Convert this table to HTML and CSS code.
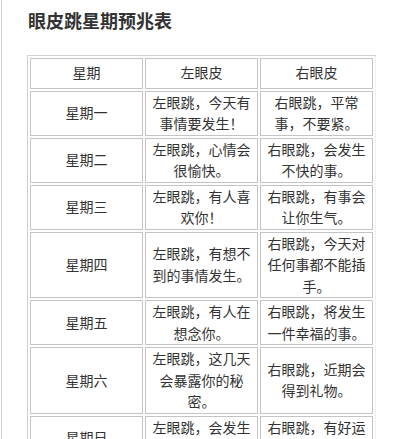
FILE: index.html
```html
<!DOCTYPE html>
<html lang="zh-CN">
<head>
<meta charset="utf-8">
<title>眼皮跳星期预兆表</title>
<link rel="stylesheet" href="styles.css">
</head>
<body>
<div class="page">
  <h2 class="title">眼皮跳星期预兆表</h2>
  <table class="omen">
    <thead>
      <tr><th>星期</th><th>左眼皮</th><th>右眼皮</th></tr>
    </thead>
    <tbody>
      <tr><td>星期一</td><td>左眼跳，今天有事情要发生！</td><td>右眼跳，平常事，不要紧。</td></tr>
      <tr><td>星期二</td><td>左眼跳，心情会很愉快。</td><td>右眼跳，会发生不快的事。</td></tr>
      <tr><td>星期三</td><td>左眼跳，有人喜欢你！</td><td>右眼跳，有事会让你生气。</td></tr>
      <tr><td>星期四</td><td>左眼跳，有想不到的事情发生。</td><td>右眼跳，今天对任何事都不能插手。</td></tr>
      <tr><td>星期五</td><td>左眼跳，有人在想念你。</td><td>右眼跳，将发生一件幸福的事。</td></tr>
      <tr><td>星期六</td><td>左眼跳，这几天会暴露你的秘密。</td><td>右眼跳，近期会得到礼物。</td></tr>
      <tr><td>星期日</td><td>左眼跳，会发生好事情。</td><td>右眼跳，有好运气。</td></tr>
    </tbody>
  </table>
</div>
</body>
</html>
```

FILE: styles.css
```css
html, body {
  margin: 0;
  padding: 0;
  background: #fff;
}
body {
  font-family: "Noto Sans CJK SC", "Noto Sans", sans-serif;
  color: #333;
}
.page {
  margin-left: 1px;
  border-left: 1px solid #d4d4d4;
  min-height: 439px;
  padding: 8px 0 0 25px;
  box-sizing: border-box;
}
.title {
  margin: 0;
  font-size: 18px;
  line-height: 24px;
  font-weight: bold;
  color: #333;
  padding-left: 1px;
}
.omen {
  margin-top: 23px;
  width: 349px;
  table-layout: fixed;
  border-collapse: separate;
  border-spacing: 2px;
  border: 1px solid #cfcfcf;
  border-right-color: #f0f0f0;
  border-bottom-color: #f0f0f0;
  font-size: 14px;
  line-height: 21.5px;
}
.omen th, .omen td {
  border: 1px solid #c4c4c4;
  text-align: center;
  vertical-align: middle;
  color: #333;
  font-weight: normal;
}
.omen th {
  padding: 3px 3px 4px;
}
.omen td {
  padding: 0 4px;
}
```
